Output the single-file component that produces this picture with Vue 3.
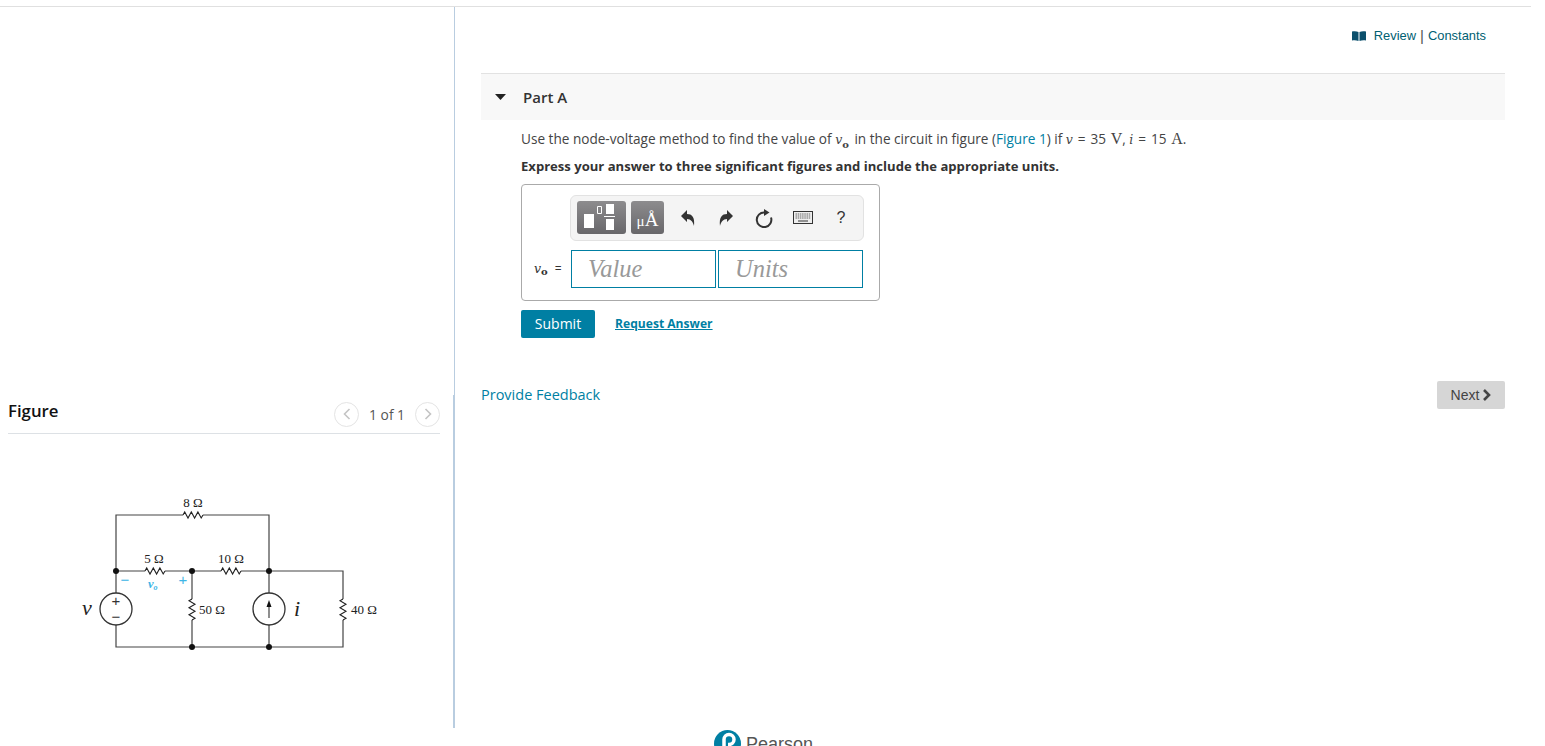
<script setup>
const wires = [
  'M116 571V515H183', 'M203 515H269V647H116V625', 'M116 593V571H145', 'M165 571H221', 'M241 571H343V599',
  'M343 620V647H269', 'M192 571V599', 'M192 620V647'
]
const nodes = [[116,571],[192,571],[269,571],[192,647],[269,647]]
</script>

<template>
  <div class="page">
    <div class="columns">
      <aside class="left">
        <div class="fig">
          <header class="fig-head">
            <h2>Figure</h2>
            <div class="pager">
              <span class="round">
                <svg width="8" height="12" viewBox="0 0 8 12"><path d="M6.5 1 1.5 6l5 5" /></svg>
              </span>
              <span class="count">1 of 1</span>
              <span class="round">
                <svg width="8" height="12" viewBox="0 0 8 12"><path d="M1.5 1l5 5-5 5" /></svg>
              </span>
            </div>
          </header>
          <svg class="circuit" width="320" height="190" viewBox="60 480 320 190">
            <path v-for="w in wires" :key="w" :d="w" class="wire" />
            <path class="res" d="M183 515l1.700-3 3.300 6 3.300-6 3.300 6 3.300-6 3.300 6 1.800-3" />
            <path class="res" d="M145 571l1.700-3 3.300 6 3.300-6 3.300 6 3.300-6 3.300 6 1.800-3" />
            <path class="res" d="M221 571l1.700-3 3.300 6 3.300-6 3.300 6 3.300-6 3.300 6 1.800-3" />
            <path class="res" d="M192 599l-3 1.800 6 3.500-6 3.500 6 3.500-6 3.500 6 3.500-3 1.700" />
            <path class="res" d="M343 599l-3 1.800 6 3.500-6 3.500 6 3.500-6 3.500 6 3.500-3 1.700" />
            <circle v-for="n in nodes" :key="n.join()" :cx="n[0]" :cy="n[1]" r="3" class="dot" />
            <circle cx="116" cy="609" r="16" class="src" />
            <circle cx="269" cy="609" r="16" class="src" />
            <path class="wire" d="M269 618V604" />
            <path class="dot" d="M269 600l-2.500 7h5z" />
            <text x="116" y="606" class="sign">+</text>
            <text x="116" y="622" class="sign">−</text>
            <text x="193" y="507" class="lab" text-anchor="middle">8 Ω</text>
            <text x="154" y="563" class="lab" text-anchor="middle">5 Ω</text>
            <text x="231" y="563" class="lab" text-anchor="middle">10 Ω</text>
            <text x="199" y="614" class="lab">50 Ω</text>
            <text x="351" y="614" class="lab">40 Ω</text>
            <text x="82" y="615" class="var">v</text>
            <text x="294" y="616" class="var">i</text>
            <text x="148" y="588" class="vo">v<tspan dy="2" font-size="8">o</tspan></text>
            <text x="125" y="585" class="blue" text-anchor="middle">−</text>
            <text x="183" y="585" class="blue" text-anchor="middle">+</text>
          </svg>
        </div>
      </aside>

      <main class="right">
        <div class="tools">
          <svg class="book" width="14" height="10" viewBox="0 0 14 10">
            <path d="M0 .5C2 0 4.500 0 6.500 1v9C4.500 9.200 2 9.200 0 9.500zM14 .5C12 0 9.500 0 7.500 1v9c2-.8 4.500-.8 6.500-.5z" />
          </svg>
          <a>Review</a><span class="bar">|</span><a>Constants</a>
        </div>

        <section class="part">
          <div class="part-head">
            <svg width="11" height="6" viewBox="0 0 11 6"><path d="M0 0h11L5.500 6z" /></svg>
            <h3>Part A</h3>
          </div>
          <div class="part-body">
            <p class="q">Use the node-voltage method to find the value of <i class="m">v</i><sub class="m0">o</sub> in the circuit in figure (<a>Figure 1</a>) if <i class="m">v</i><span class="op">=</span>35 <span class="up">V</span>, <i class="m">i</i><span class="op">=</span>15 <span class="up">A</span>.</p>
            <p class="ins">Express your answer to three significant figures and include the appropriate units.</p>

            <div class="answer">
              <div class="toolbar">
                <button class="tbtn tmpl" aria-label="templates">
                  <svg width="49" height="33" viewBox="0 0 49 33">
                    <path d="M7 13h10v14H7z" fill="#fff" />
                    <path d="M20.500 5.500h4v7h-4z" fill="none" stroke="#fff" />
                    <path d="M29 3h8v10h-8zM29 18h8v11h-8zM27 15h11v1H27z" fill="#fff" />
                  </svg>
                </button>
                <button class="tbtn unit"><span class="mu">μ</span><span class="ang">Å</span></button>
                <span class="ic">
                  <svg width="16" height="18" viewBox="0 0 16 18"><path d="M1 7l6-6v4c5 0 8 3 7 12-1-4-3-7-7-7v3z" /></svg>
                </span>
                <span class="ic">
                  <svg width="16" height="18" viewBox="0 0 16 18"><path d="M15 7 9 1v4c-5 0-8 3-7 12 1-4 3-7 7-7v3z" /></svg>
                </span>
                <span class="ic">
                  <svg width="18" height="20" viewBox="0 0 18 20"><path d="M9.500 4.500A7.300 7.300 0 1 0 16 9.500" class="ring" /><path d="M9 1v7l5.500-3.500z" /></svg>
                </span>
                <span class="ic">
                  <svg width="20" height="13" viewBox="0 0 20 13"><rect x=".5" y=".5" width="19" height="12" fill="#eee" stroke="#333" /><path d="M2.500 3h15M2.500 5h15M2.500 7h15" stroke="#666" stroke-dasharray="1.500 .7" /><path d="M5 10h10" stroke="#333" /></svg>
                </span>
                <span class="ic help">?</span>
              </div>
              <div class="inputs">
                <span class="lhs"><i class="m">v</i><span class="m0 low">o</span><span class="eq">=</span></span>
                <div class="field">Value</div>
                <div class="field">Units</div>
              </div>
            </div>

            <div class="actions">
              <button class="submit">Submit</button>
              <a class="req">Request Answer</a>
            </div>
          </div>
        </section>

        <div class="foot">
          <a class="fb">Provide Feedback</a>
          <button class="next">Next
            <svg width="9" height="12" viewBox="0 0 9 12"><path d="M2 1l5 5-5 5" /></svg>
          </button>
        </div>
      </main>
    </div>

    <div class="brand">
      <svg width="27" height="27" viewBox="0 0 27 27">
        <circle cx="13.500" cy="13.500" r="13.500" fill="#007fa3" />
        <path d="M10 21V9.500a5 5 0 1 1 5 5h-1" fill="none" stroke="#fff" stroke-width="3.500" />
      </svg>
      <span>Pearson</span>
    </div>
  </div>
</template>

<style scoped>
.page {
  width: 1545px;
  height: 746px;
  overflow: hidden;
  font-family: "Open Sans", sans-serif;
  color: #333;
  font-size: 13px;
  position: relative;
}
a { color: #007fa3; }
p, h2, h3 { margin: 0; }
button { font-family: inherit; border: 0; padding: 0; }

.columns {
  display: flex;
  width: 1531px;
  height: 722px;
  margin-top: 6px;
  border-top: 1px solid #e0e0e0;
}
.left {
  width: 455px;
  flex: none;
  height: 721px;
  box-sizing: border-box;
  border-right: 1px solid #b9cde0;
  padding-top: 388px;
}
.fig {
  height: 333px;
  box-sizing: border-box;
  border-right: 1px solid #b9cde0;
  padding: 0 13px 0 8px;
}
.fig-head {
  display: flex;
  justify-content: space-between;
  align-items: center;
  width: 432px;
  height: 38px;
  border-bottom: 1px solid #dde1e5;
}
.fig-head h2 { font-size: 16.800px; font-weight: 600; color: #111; margin-top: -8px; }
.pager { display: flex; align-items: center; gap: 10px; }
.round {
  width: 25px;
  height: 25px;
  box-sizing: border-box;
  border: 1px solid #e4e4e4;
  border-radius: 50%;
  display: flex;
  align-items: center;
  justify-content: center;
}
.round svg path { fill: none; stroke: #c4c4c4; stroke-width: 1.6; }
.count { font-size: 13.800px; color: #555; }
.circuit { display: block; margin: 46px 0 0 52px; }
.wire { fill: none; stroke: #444; stroke-width: 1.2; }
.res { fill: none; stroke: #222; stroke-width: 1.1; }
.dot { fill: #111; }
.src { fill: #fff; stroke: #333; stroke-width: 1.3; }
.lab { font: 13px "Liberation Serif", serif; fill: #222; }
.var { font: italic 22px "Liberation Serif", serif; fill: #222; }
.sign { font: 15px "Liberation Sans", sans-serif; text-anchor: middle; fill: #333; }
.vo { font: italic bold 12.500px "Liberation Serif", serif; fill: #3db5e6; }
.blue { font: 15px "Liberation Sans", sans-serif; fill: #3db5e6; }

.right {
  flex: 1;
  min-width: 0;
  padding: 0 26px 0 26px;
}
.tools {
  height: 66px;
  display: flex;
  align-items: center;
  justify-content: flex-end;
  padding-right: 19px;
  padding-bottom: 9px;
  box-sizing: border-box;
  font: 12.900px "Liberation Sans", Arial, sans-serif;
}
.tools a { color: #006072; }
.book { margin-right: 8px; fill: #0b4f6c; }
.bar { margin: 0 4px 0 4px; color: #555; font-size: 15px; }
.part { border-top: 1px solid #e2e2e2; }
.part-head {
  display: flex;
  align-items: center;
  height: 46px;
  background: #f8f8f8;
  padding-left: 14px;
}
.part-head svg { fill: #222; }
.part-head h3 { font-size: 15px; font-weight: 600; color: #333; margin-left: 17px; }
.part-body { padding: 10px 0 0 40px; }
.q { line-height: 18px; font-size: 13.600px; color: #444; white-space: nowrap; }
.q a { color: #007fa3; }
.m { font-family: "DejaVu Serif", "Liberation Serif", serif; font-size: 12.500px; font-style: italic; font-weight: 400; }
.op { margin: 0 5px; }
.up { font-family: "Liberation Serif", serif; font-size: 16px; margin-left: 1px; }
.m0 { font-family: "DejaVu Serif", serif; font-size: 10px; font-weight: 700; margin-right: 2px; }
.ins { margin-top: 3px; font-weight: 700; line-height: 18px; color: #333; font-size: 13.080px; }
.answer {
  margin-top: 9px;
  width: 359px;
  height: 117px;
  box-sizing: border-box;
  border: 1px solid #aaa;
  border-radius: 4px;
  padding: 10px 16px 0 48px;
}
.toolbar {
  height: 46px;
  box-sizing: border-box;
  width: 294px;
  background: #f4f4f4;
  border: 1px solid #e2e2e2;
  border-radius: 6px;
  display: flex;
  align-items: center;
  padding-left: 6px;
}
.tbtn {
  height: 33px;
  border-radius: 3px;
  background: linear-gradient(#8d8c8e, #68676a);
  color: #fff;
  display: flex;
  align-items: center;
  justify-content: center;
}
.tmpl { width: 49px; }
.unit { width: 33px; margin-left: 5px; font-family: "Liberation Serif", serif; align-items: flex-end; padding-bottom: 4px; box-sizing: border-box; }
.mu { font-size: 15px; line-height: 17px; }
.ang { font-size: 19px; line-height: 20px; }
.ic { width: 38.200px; display: flex; align-items: center; justify-content: center; fill: #333; }
.unit + .ic { margin-left: 5px; }
.ring { fill: none; stroke: #333; stroke-width: 2; }
.help { font: 16px "Liberation Sans", sans-serif; color: #333; }
.inputs { display: flex; align-items: center; margin-top: 9px; margin-left: -36px; }
.lhs { width: 37px; flex: none; font-size: 12px; white-space: nowrap; color: #333; }
.low { position: relative; top: 2px; }
.eq { margin-left: 5px; }
.field {
  width: 145px;
  height: 38px;
  box-sizing: border-box;
  border: 1px solid #007fa3;
  margin-right: 2px;
  padding-left: 16px;
  font: italic 24.500px/36px "Liberation Serif", serif;
  color: #999;
}
.field + .field { margin-right: 0; }
.actions { display: flex; align-items: center; margin-top: 9px; }
.submit {
  width: 74px;
  height: 28px;
  background: #007fa3;
  color: #fff;
  font-size: 14px;
  font-weight: 500;
  border-radius: 2px;
}
.req { margin-left: 20px; font-size: 12.100px; font-weight: 700; text-decoration: underline; }
.foot {
  display: flex;
  justify-content: space-between;
  align-items: center;
  margin-top: 43px;
}
.fb { font-size: 14.500px; }
.next {
  width: 68px;
  height: 28px;
  border-radius: 2px;
  background: #d6d6d6;
  color: #444;
  font: 14px "Liberation Sans", sans-serif;
  display: flex;
  align-items: center;
  justify-content: center;
  gap: 3px;
}
.next path { fill: none; stroke: #444; stroke-width: 2.600; }
.brand {
  position: absolute;
  left: 714px;
  top: 730px;
  display: flex;
  align-items: flex-start;
  gap: 5px;
  font: 18px "Liberation Sans", sans-serif;
  color: #555;
}
.brand span { line-height: 22px; margin-top: 3px; }
</style>

<style>
html, body { margin: 0; overflow: hidden; background: #fff; }
</style>
